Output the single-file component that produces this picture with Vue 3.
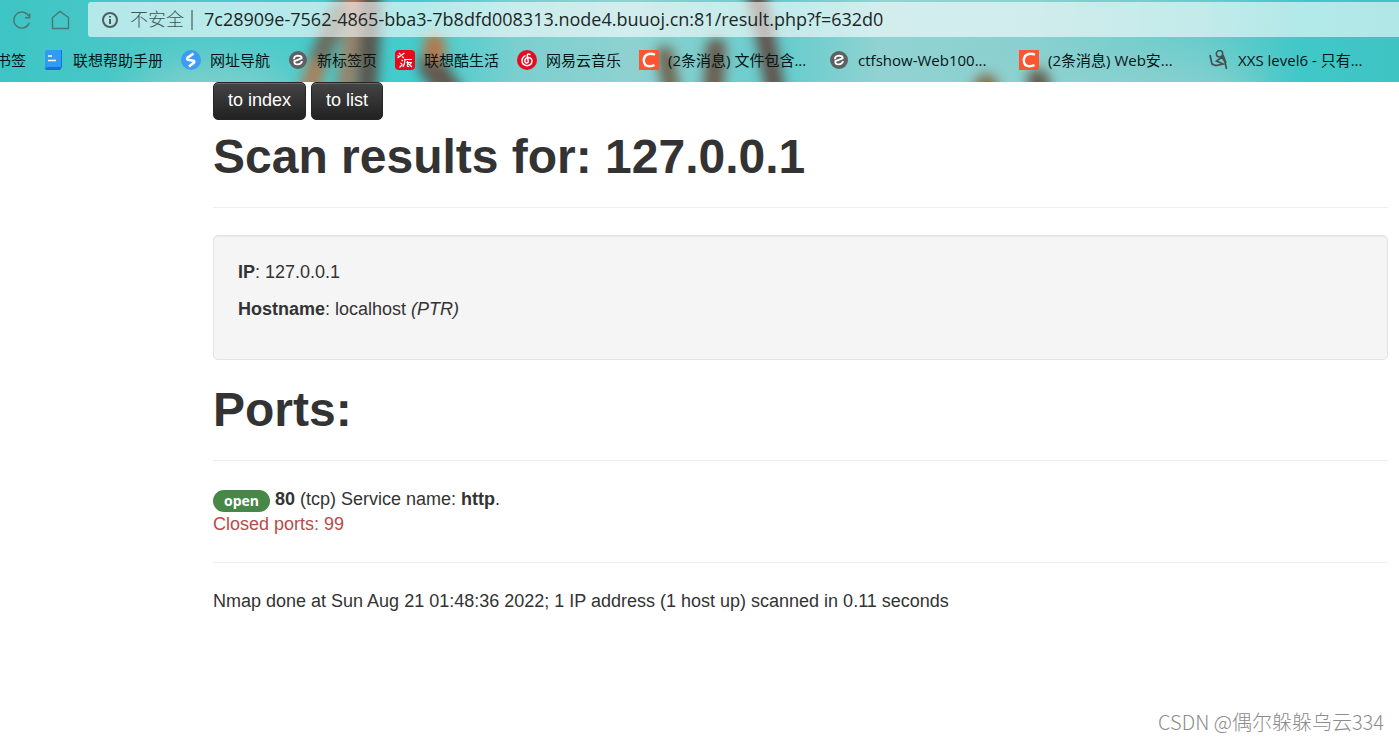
<script setup>
import { ref } from 'vue'

const address = ref('7c28909e-7562-4865-bba3-7b8dfd008313.node4.buuoj.cn:81/result.php?f=632d0')

const bookmarks = [
  { icon: 'manual', label: '联想帮助手册' },
  { icon: 'nav', label: '网址导航' },
  { icon: 'e', label: '新标签页' },
  { icon: 'cool', label: '联想酷生活' },
  { icon: 'music', label: '网易云音乐' },
  { icon: 'c', label: '(2条消息) 文件包含...', wide: true },
  { icon: 'e', label: 'ctfshow-Web100...', wide: true },
  { icon: 'c', label: '(2条消息) Web安...', wide: true },
  { icon: 'figure', label: 'XXS level6 - 只有...', wide: true }
]
</script>

<template>
  <div class="page">
    <header class="chrome">
      <svg class="scene" viewBox="0 0 1399 82" preserveAspectRatio="none" aria-hidden="true">
        <defs>
          <linearGradient id="sky">
            <stop offset="0" stop-color="#3ec4c4" />
            <stop offset="0.14" stop-color="#4ecaca" />
            <stop offset="0.3" stop-color="#42cccc" />
            <stop offset="0.37" stop-color="#7bcfcf" />
            <stop offset="0.45" stop-color="#8fd1d1" />
            <stop offset="0.56" stop-color="#66cccc" />
            <stop offset="0.63" stop-color="#92d2d2" />
            <stop offset="0.74" stop-color="#8ad0d0" />
            <stop offset="0.86" stop-color="#68cccb" />
            <stop offset="0.93" stop-color="#40c8c8" />
            <stop offset="1" stop-color="#3fc3c3" />
          </linearGradient>
          <filter id="soft" x="-50%" y="-50%" width="200%" height="200%" color-interpolation-filters="sRGB"><feGaussianBlur stdDeviation="6" /></filter>
          <filter id="haze" x="-50%" y="-100%" width="200%" height="300%" color-interpolation-filters="sRGB"><feGaussianBlur stdDeviation="20" /></filter>
        </defs>
        <rect width="1399" height="82" fill="url(#sky)" />
        <g filter="url(#haze)">
          <ellipse cx="215" cy="90" rx="85" ry="24" fill="#86d0cc" />
          <ellipse cx="1130" cy="86" rx="140" ry="20" fill="#8fd2d0" />
        </g>
        <g filter="url(#soft)" fill="none" stroke-linecap="round">
          <path d="M340 10L327 40L318 62" stroke="#6b6c5e" stroke-width="20" />
          <path d="M316 68L308 94" stroke="#a8805c" stroke-width="20" />
          <path d="M352 30L345 94" stroke="#98836a" stroke-width="18" />
          <path d="M354 -8L360 12" stroke="#b47861" stroke-width="24" />
          <path d="M371 -8L370 40L367 94" stroke="#5a564e" stroke-width="20" />
          <path d="M431 65L451 94" stroke="#605850" stroke-width="26" />
          <path d="M434 44L435 54" stroke="#b5774a" stroke-width="22" />
          <path d="M665 54L672 94" stroke="#706651" stroke-width="17" />
          <path d="M716 48L713 94" stroke="#6b5c4e" stroke-width="20" />
          <path d="M756 -8L766 40L776 94" stroke="#61534c" stroke-width="19" />
          <path d="M986 86L987 96" stroke="#846c4c" stroke-width="24" />
          <path d="M1038 80L1042 96" stroke="#655c4b" stroke-width="22" />
        </g>
      </svg>

      <div class="toolbar">
        <button class="tool" type="button" aria-label="Reload">
          <svg viewBox="0 0 20 20"><path d="M17 6.5A8 8 0 1 0 17.3 13M17.7 3.5V7.8H13" /></svg>
        </button>
        <button class="tool" type="button" aria-label="Home">
          <svg viewBox="0 0 20 20"><path d="M2.5 18.5V7.5L10 1.5L18.5 7.5V18.5Z" /></svg>
        </button>
        <div class="address">
          <svg class="info" viewBox="0 0 18 18" aria-hidden="true">
            <circle cx="9" cy="9" r="7" /><path d="M9 8V13M9 5V6.6" />
          </svg>
          <label class="insecure" for="url">不安全</label>
          <span class="bar"></span>
          <input id="url" v-model="address" type="text" spellcheck="false" />
        </div>
      </div>

      <nav class="bookmarks">
        <a class="partial" href="#"><span>书签</span></a>
        <a v-for="(b, i) in bookmarks" :key="i" href="#" class="bookmark">
          <svg v-if="b.icon === 'manual'" viewBox="0 0 20 20">
            <path d="M3 2Q3 0 5 0H18V17L16 20H3Q0 20 1 17Z" fill="#176fce" />
            <path d="M1 2Q1 0 3 0H17V17H4Q2 17 1 19Z" fill="#2f9bf3" />
            <path d="M4 6H8M4 10.5H12" stroke="#fff" stroke-width="1.6" />
          </svg>
          <svg v-else-if="b.icon === 'nav'" viewBox="0 0 20 20">
            <circle cx="10" cy="10" r="10" fill="#3c9cf4" />
            <path d="M12.5 3.5L6.5 7.8Q5.5 9 7 9.7L12.5 10.8Q14 11.5 12.8 12.8L8 16.5" fill="none" stroke="#fff" stroke-width="2.6" />
          </svg>
          <svg v-else-if="b.icon === 'e'" viewBox="0 0 20 20">
            <circle cx="10" cy="10" r="9" fill="#5f6064" />
            <path d="M6 9.3Q6 5.8 9.8 5.6Q14 5.8 13.6 8.3L6.4 11.2Q5.8 14.3 9.6 14.4Q13.6 14.2 13.9 11" fill="none" stroke="#fff" stroke-width="1.9" />
          </svg>
          <svg v-else-if="b.icon === 'cool'" viewBox="0 0 20 20">
            <rect width="20" height="20" rx="4" fill="#e60b1c" />
            <path d="M2.5 8L9.5 3M4 3L5.5 4.5M2.5 5.5L4 6.5M7 6.5L9 8M6.5 10L8 11M5.5 13L7 14M4.5 17.5L7.5 14.5M9 9.5H17M10 9.5Q10 14 8 17M12.5 11V17M11.5 12.5H17M12.5 13L17 17M16.5 12.5L13 17" fill="none" stroke="#fff" stroke-width="1.2" />
          </svg>
          <svg v-else-if="b.icon === 'music'" viewBox="0 0 20 20">
            <circle cx="10" cy="10" r="10" fill="#e60b20" />
            <path d="M13 4.5Q10.2 3.2 10.2 6L11.3 11.3Q11 13.3 9.2 13Q7.4 12.2 7.8 10Q8.8 7.5 11.6 7.5Q15 8 15 11.2Q14.4 15.7 10 15.7Q5 15.2 5 10.5Q5.2 7.2 8 5.8" fill="none" stroke="#fff" stroke-width="1.5" stroke-linecap="round" />
          </svg>
          <svg v-else-if="b.icon === 'c'" viewBox="0 0 20 20">
            <rect width="20" height="20" fill="#fc5531" />
            <path d="M16 4.8Q13 3.3 9.5 4Q5 5.2 4.8 10.5Q5 16 10 16.2Q13 16.4 15.5 15" fill="none" stroke="#fff" stroke-width="2.4" />
          </svg>
          <svg v-else viewBox="0 0 20 20">
            <circle cx="10.5" cy="3.8" r="3.2" fill="none" stroke="#465052" stroke-width="1.5" />
            <path d="M1 5L3 14L7 15.5L14 14L7.5 11L13 7L16 12L17.5 19M14 5L17 13" fill="none" stroke="#465052" stroke-width="1.7" />
          </svg>
          <span :class="{ wide: b.wide }">{{ b.label }}</span>
        </a>
      </nav>
    </header>

    <main>
      <div class="actions">
        <button class="btn" type="button">to index</button>
        <button class="btn" type="button">to list</button>
      </div>
      <h1>Scan results for: 127.0.0.1</h1>
      <hr />
      <section class="well">
        <p><strong>IP</strong>: 127.0.0.1</p>
        <p><strong>Hostname</strong>: localhost <em>(PTR)</em></p>
      </section>
      <h1>Ports:</h1>
      <hr />
      <div class="port"><span class="badge">open</span> <strong>80</strong> (tcp) Service name: <strong>http</strong>.</div>
      <div class="closed">Closed ports: 99</div>
      <hr />
      <div>Nmap done at Sun Aug 21 01:48:36 2022; 1 IP address (1 host up) scanned in 0.11 seconds</div>
    </main>

    <footer>CSDN @偶尔躲躲乌云334</footer>
  </div>
</template>

<style>
body {
  margin: 0;
  background: #fff;
}
</style>

<style scoped>
.page {
  display: flex;
  flex-direction: column;
  min-height: 100vh;
  color: #333;
  font: 18px/25px "Liberation Sans", Arial, sans-serif;
}
.chrome {
  position: relative;
  overflow: hidden;
  font-family: "Open Sans", "Noto Sans CJK SC", sans-serif;
}
.scene {
  position: absolute;
  inset: 0;
  width: 100%;
  height: 100%;
}
.toolbar {
  position: relative;
  display: flex;
  align-items: center;
  padding: 2px 0 0 12px;
}
.tool {
  width: 20px;
  height: 20px;
  margin-right: 18px;
  padding: 0;
  border: 0;
  background: none;
}
.tool svg {
  display: block;
  fill: none;
  stroke: #4c7777;
  stroke-width: 1.4;
}
.address {
  display: flex;
  flex: 1;
  align-items: center;
  height: 35px;
  padding-left: 13px;
  border-radius: 3px 0 0 3px;
  background: rgba(255, 255, 255, 0.6);
}
.info {
  width: 18px;
  height: 18px;
  fill: none;
  stroke: #4b5f60;
  stroke-width: 2;
}
.insecure {
  margin-left: 11px;
  color: #3f5657;
  font-size: 18px;
  font-weight: 300;
}
.bar {
  width: 2px;
  height: 20px;
  margin: 0 11px 0 7px;
  background: #769596;
}
input {
  flex: 1;
  min-width: 0;
  padding: 0;
  border: 0;
  outline: 0;
  background: none;
  color: #1c2728;
  font: 18px/25px "Open Sans", sans-serif;
}
.bookmarks {
  position: relative;
  display: flex;
  align-items: center;
  height: 45px;
  gap: 18px;
  font-size: 15px;
  line-height: 24px;
  white-space: nowrap;
}
.bookmarks a {
  color: #071516;
  text-decoration: none;
}
.partial {
  display: flex;
  justify-content: flex-end;
  flex: none;
  width: 26px;
  overflow: hidden;
}
.bookmark {
  display: flex;
  flex: none;
  align-items: center;
  gap: 9px;
}
.bookmark svg {
  width: 20px;
  height: 20px;
}
.wide {
  width: 143px;
}
main {
  flex: 1;
  padding: 0 11px 0 213px;
}
.actions {
  display: flex;
  gap: 5px;
}
.btn {
  height: 38px;
  padding: 0 14px 2px;
  border: 1px solid #252525;
  border-radius: 5px;
  background: linear-gradient(#444, #222);
  box-shadow: inset 0 1px 0 rgba(255, 255, 255, 0.2);
  color: #fff;
  font: 18px/25px "Liberation Sans", Arial, sans-serif;
}
h1 {
  margin: 12px 0;
  font-size: 48px;
  line-height: 50px;
}
hr {
  margin: 25px 0;
  border: 0;
  border-top: 1px solid #eee;
  border-bottom: 1px solid #fff;
}
.well {
  margin: 26px 0 25px;
  padding: 24px 24px 25px;
  border: 1px solid #e3e3e3;
  border-radius: 5px;
  background: #f5f5f5;
  box-shadow: inset 0 1px 1px rgba(0, 0, 0, 0.05);
}
.well p {
  margin: 0 0 12px;
}
.badge {
  display: inline-block;
  padding: 2px 11px 3px;
  border-radius: 11px;
  background: #468847;
  color: #fff;
  font: bold 14px/17px "Open Sans", sans-serif;
  vertical-align: -1px;
}
.port {
  height: 25px;
}
.closed {
  color: #b94a48;
}
footer {
  padding: 0 15px 7px;
  color: #8c8c8c;
  font: 300 20px/25px "Noto Sans CJK SC", sans-serif;
  text-align: right;
}
</style>
